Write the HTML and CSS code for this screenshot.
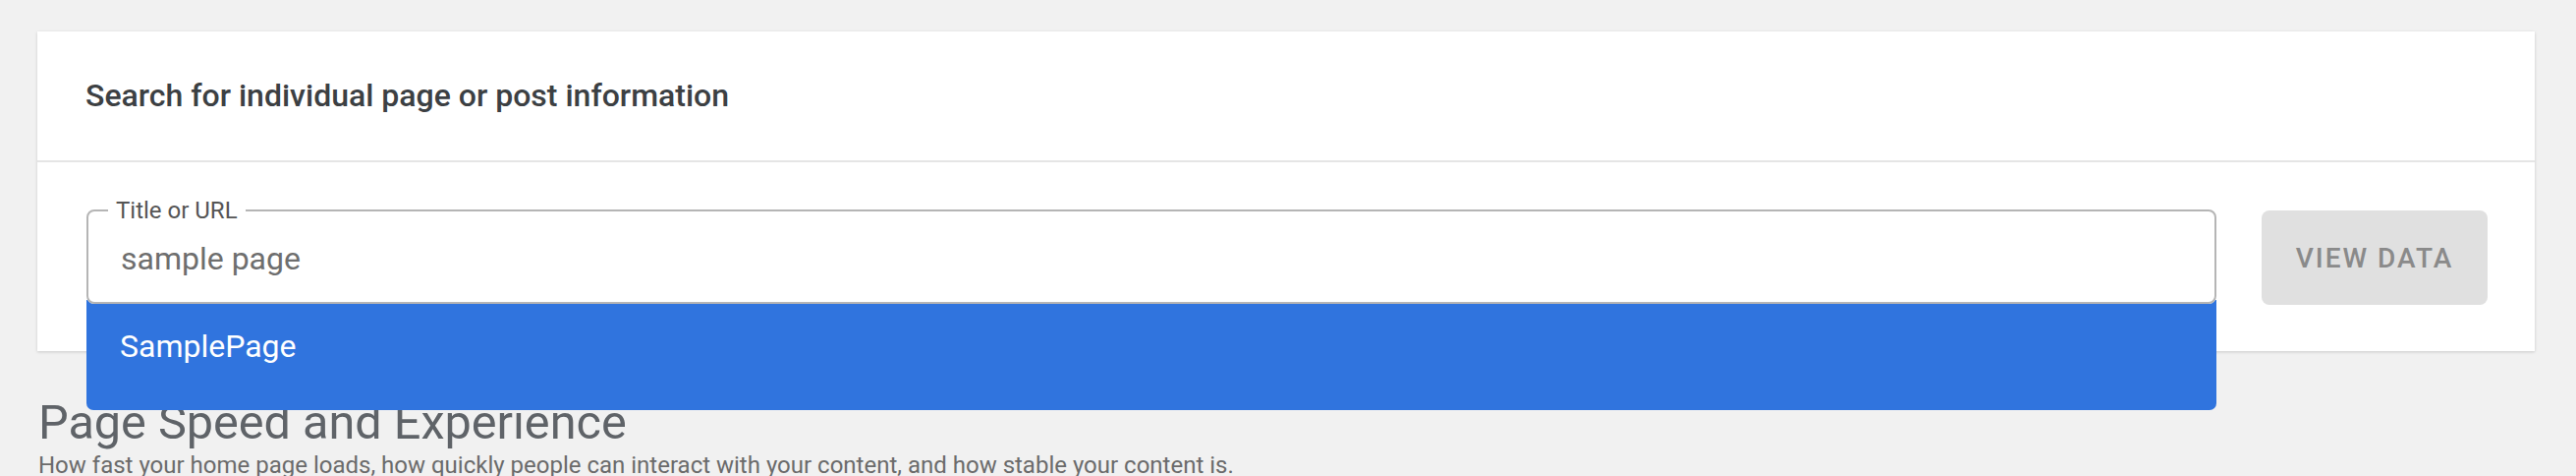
FILE: index.html
```html
<!DOCTYPE html>
<html lang="en">
<head>
<meta charset="utf-8">
<title>Search</title>
<link rel="stylesheet" href="styles.css">
</head>
<body>
<main class="page">
  <section class="card">
    <header class="card-header">
      <h2 class="card-title">Search for individual page or post information</h2>
    </header>
    <div class="card-body">
      <div class="field-wrap">
        <fieldset class="field">
          <legend class="field-label">Title or URL</legend>
          <input class="field-input" type="text" value="sample page">
        </fieldset>
        <ul class="dropdown">
          <li class="dropdown-item">SamplePage</li>
        </ul>
      </div>
      <button class="btn" type="button">View Data</button>
    </div>
  </section>
  <h1 class="section-title">Page Speed and Experience</h1>
  <p class="section-sub">How fast your home page loads, how quickly people can interact with your content, and how stable your content is.</p>
</main>
</body>
</html>
```
FILE: styles.css
```css
html, body {
  margin: 0;
  padding: 0;
}
body {
  background: #f1f1f1;
  font-family: Roboto, "Liberation Sans", Arial, sans-serif;
  overflow: hidden;
}
.page {
  padding: 32px 42px 0 38px;
}
.card {
  background: #ffffff;
  box-shadow: 0 1px 3px rgba(0, 0, 0, 0.16);
}
.card-header {
  padding: 46px 49px 46.6px;
  border-bottom: 2px solid #e5e5e5;
}
.card-title {
  margin: 0;
  font-size: 32px;
  line-height: 38.4px;
  font-weight: 500;
  color: #3c4043;
}
.card-body {
  display: flex;
  align-items: flex-end;
  gap: 46px;
  padding: 35px 48px 48px 50px;
}
.field-wrap {
  position: relative;
  flex: 1;
}
.field {
  position: relative;
  z-index: 2;
  margin: 0;
  padding: 0;
  border: 2px solid #b5b5b5;
  border-radius: 8px;
  background: #ffffff;
  min-width: 0;
}
.field-label {
  margin-left: 20px;
  padding: 0 8px;
  font-size: 24px;
  line-height: 28px;
  color: #555555;
}
.field-input {
  display: block;
  box-sizing: border-box;
  width: 100%;
  height: 79px;
  margin: 0;
  padding: 0 33px 10px;
  border: none;
  outline: none;
  background: transparent;
  font-family: Roboto, "Liberation Sans", Arial, sans-serif;
  font-size: 32px;
  color: #6e6e6e;
}
.dropdown {
  position: absolute;
  z-index: 1;
  left: 0;
  right: 0;
  top: calc(100% - 4px);
  margin: 0;
  padding: 0;
  list-style: none;
  background: #3074de;
  border-radius: 0 0 7px 7px;
}
.dropdown-item {
  height: 112px;
  box-sizing: border-box;
  padding: 28px 34px 0;
  font-size: 32px;
  line-height: 38px;
  color: #ffffff;
}
.btn {
  flex: none;
  width: 230px;
  height: 96px;
  margin-bottom: -1px;
  border: none;
  border-radius: 8px;
  background: #e0e0e0;
  color: #8a8a8a;
  font-family: Roboto, "Liberation Sans", Arial, sans-serif;
  font-size: 28px;
  font-weight: 500;
  letter-spacing: 2px;
  text-transform: uppercase;
  padding: 0;
}
.section-title {
  margin: 44px 0 0 1px;
  font-size: 48.6px;
  line-height: 57.6px;
  font-weight: 400;
  color: #5f6368;
}
.section-sub {
  margin: 0 0 0 1px;
  font-size: 24px;
  line-height: 28.8px;
  color: #6b6b6b;
}
```
